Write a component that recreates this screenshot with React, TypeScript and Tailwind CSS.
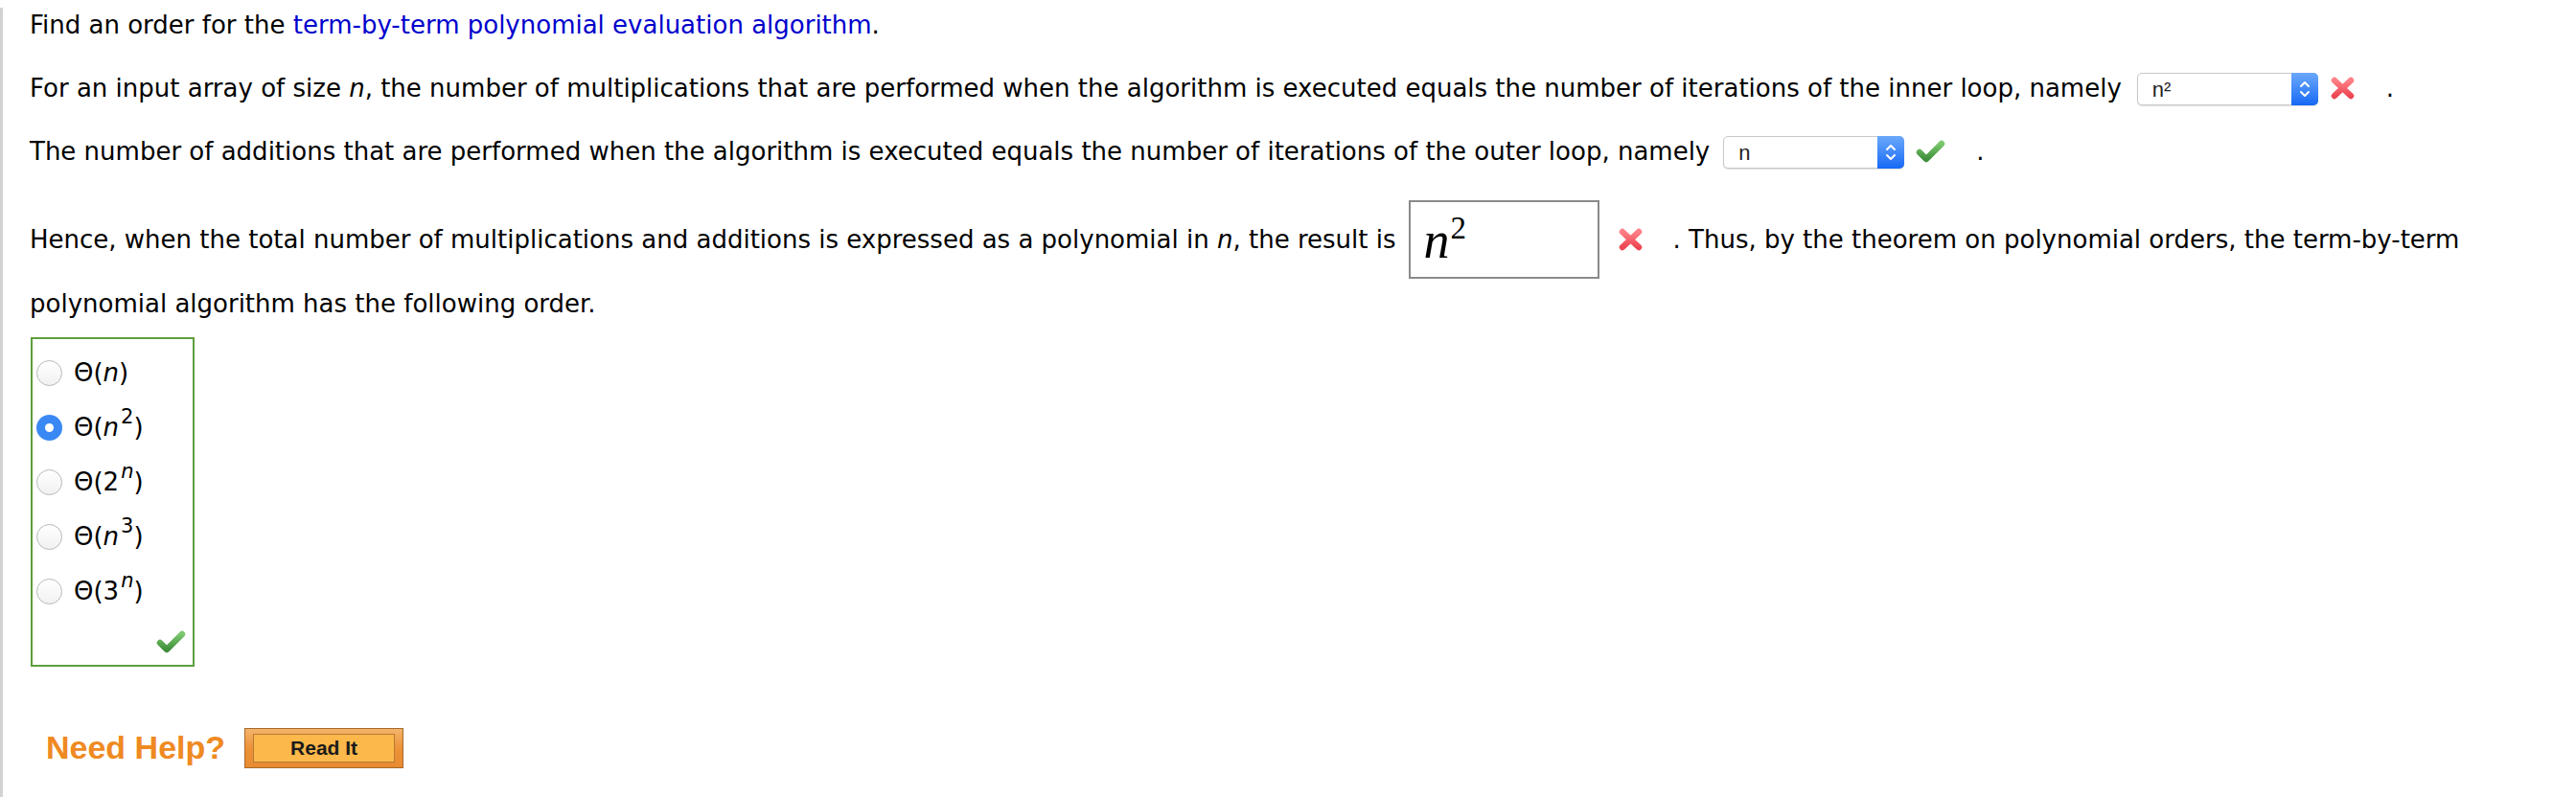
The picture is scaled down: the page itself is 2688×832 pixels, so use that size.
import React from 'react';

const bodyFont = { fontFamily: "'DejaVu Sans', Verdana, sans-serif" };
const serifFont = { fontFamily: "'Liberation Serif', 'Times New Roman', serif" };
const arialFont = { fontFamily: "'Liberation Sans', Arial, sans-serif" };

function RedX({ className = '' }: { className?: string }) {
  return (
    <svg width="27" height="24" viewBox="0 0 27 24" className={className}>
      <defs>
        <linearGradient id="xg" x1="0" y1="0" x2="0" y2="1">
          <stop offset="0" stopColor="#ff8087" />
          <stop offset="1" stopColor="#ec4652" />
        </linearGradient>
      </defs>
      <path d="M5 4 L22 20 M22 4 L5 20" stroke="url(#xg)" strokeWidth="6.5" strokeLinecap="round" fill="none" />
    </svg>
  );
}

function GreenCheck({ className = '' }: { className?: string }) {
  return (
    <svg width="32" height="26" viewBox="0 0 32 26" className={className}>
      <defs>
        <linearGradient id="cg" x1="0" y1="0" x2="0" y2="1">
          <stop offset="0" stopColor="#7cc86e" />
          <stop offset="1" stopColor="#3f8f3c" />
        </linearGradient>
      </defs>
      <path d="M5 14 L12 21 L28 5" stroke="url(#cg)" strokeWidth="6.5" strokeLinecap="round" strokeLinejoin="round" fill="none" />
    </svg>
  );
}

function Dropdown({ value }: { value: React.ReactNode }) {
  return (
    <div className="inline-flex h-[34px] w-[189px] rounded-[5px] border border-[#c8c8c8] bg-white shadow-[0_1px_1px_rgba(0,0,0,0.12)] align-middle">
      <div className="flex-1 flex items-center pl-[15px] text-[22px] text-[#222]" style={arialFont}>
        {value}
      </div>
      <div className="w-[28px] -my-px -mr-px rounded-r-[5px] bg-gradient-to-b from-[#6aa8fb] to-[#1468f5] flex items-center justify-center">
        <svg width="14" height="22" viewBox="0 0 14 22">
          <path d="M3 8 L7 4 L11 8 M3 14 L7 18 L11 14" stroke="white" strokeWidth="2" fill="none" strokeLinecap="round" strokeLinejoin="round" />
        </svg>
      </div>
    </div>
  );
}

function Radio({ checked }: { checked?: boolean }) {
  if (checked) {
    return (
      <div className="w-[27px] h-[27px] rounded-full bg-[#3a88f4] flex items-center justify-center shrink-0">
        <div className="w-[9px] h-[9px] rounded-full bg-white" />
      </div>
    );
  }
  return <div className="w-[27px] h-[27px] rounded-full border border-[#b8b8b8] bg-gradient-to-b from-white to-[#f1f1f1] shrink-0" />;
}

function Sup({ children }: { children: React.ReactNode }) {
  return <sup className="text-[21px] -top-[13px] ml-[2px]">{children}</sup>;
}

export default function App() {
  const options: { label: React.ReactNode; checked?: boolean }[] = [
    { label: <>Θ(<i>n</i>)</> },
    { label: <>Θ(<i>n</i><Sup>2</Sup>)</>, checked: true },
    { label: <>Θ(2<Sup><i>n</i></Sup>)</> },
    { label: <>Θ(<i>n</i><Sup>3</Sup>)</> },
    { label: <>Θ(3<Sup><i>n</i></Sup>)</> },
  ];

  return (
    <div className="w-[2688px] h-[832px] bg-white overflow-hidden">
      <div className="h-full border-l-[3px] border-[#d2d2d2] pl-[28px] text-[26px] text-black" style={bodyFont}>
        {/* Question lines */}
        <div className="h-[36px] mt-[8px] flex items-center whitespace-nowrap">
          Find an order for the&nbsp;<span className="text-[#0000cc]">term-by-term polynomial evaluation algorithm</span>.
        </div>

        <div className="h-[36px] mt-[30px] flex items-center whitespace-nowrap">
          <span>For an input array of size <i>n</i>, the number of multiplications that are performed when the algorithm is executed equals the number of iterations of the inner loop, namely</span>
          <span className="ml-[16px]"><Dropdown value={<>n²</>} /></span>
          <RedX className="ml-[12px]" />
          <span className="ml-[32px]">.</span>
        </div>

        <div className="h-[36px] mt-[30px] flex items-center whitespace-nowrap">
          <span>The number of additions that are performed when the algorithm is executed equals the number of iterations of the outer loop, namely</span>
          <span className="ml-[14px]"><Dropdown value="n" /></span>
          <GreenCheck className="ml-[11px]" />
          <span className="ml-[32px]">.</span>
        </div>

        <div className="h-[82px] mt-[33px] flex items-center whitespace-nowrap">
          <span>Hence, when the total number of multiplications and additions is expressed as a polynomial in <i>n</i>, the result is</span>
          <div className="ml-[13px] w-[199px] h-[82px] border-2 border-[#8a8a8a] flex items-start pl-[14px]" style={serifFont}>
            <span className="italic text-[54px] leading-[54px] mt-[13px]" style={serifFont}>n</span>
            <span className="text-[33px] leading-[33px] mt-[11px] ml-px" style={serifFont}>2</span>
          </div>
          <RedX className="ml-[19px]" />
          <span className="ml-[31px]">. Thus, by the theorem on polynomial orders, the term-by-term</span>
        </div>

        <div className="h-[36px] mt-[8px] flex items-center whitespace-nowrap">
          polynomial algorithm has the following order.
        </div>

        {/* Answer choices */}
        <div className="mt-[17px] ml-px w-[171px] h-[344px] border-2 border-[#5d9f3d] flex flex-col pt-[7px] pl-[4px]">
          {options.map((o, i) => (
            <div key={i} className="h-[57px] flex items-center gap-[12px] whitespace-nowrap">
              <Radio checked={o.checked} />
              <span className="text-[26px]">{o.label}</span>
            </div>
          ))}
          <div className="flex-1 flex items-end justify-end pr-[7px] pb-[11px]">
            <GreenCheck />
          </div>
        </div>

        {/* Help */}
        <div className="mt-[59px] flex items-center">
          <span className="ml-[17px] text-[34px] font-bold text-[#ef8a22]" style={arialFont}>Need Help?</span>
          <button className="ml-[20px] w-[166px] h-[42px] border border-[#a8692b] bg-gradient-to-b from-[#f3b46a] via-[#ec9238] to-[#e88a30] px-[8px] py-[5px]">
            <div className="h-full border border-[#b87a34] bg-[#fcb84a] flex items-center justify-center text-[21px] font-bold text-[#1a1a1a]" style={arialFont}>
              Read It
            </div>
          </button>
        </div>
      </div>
    </div>
  );
}
